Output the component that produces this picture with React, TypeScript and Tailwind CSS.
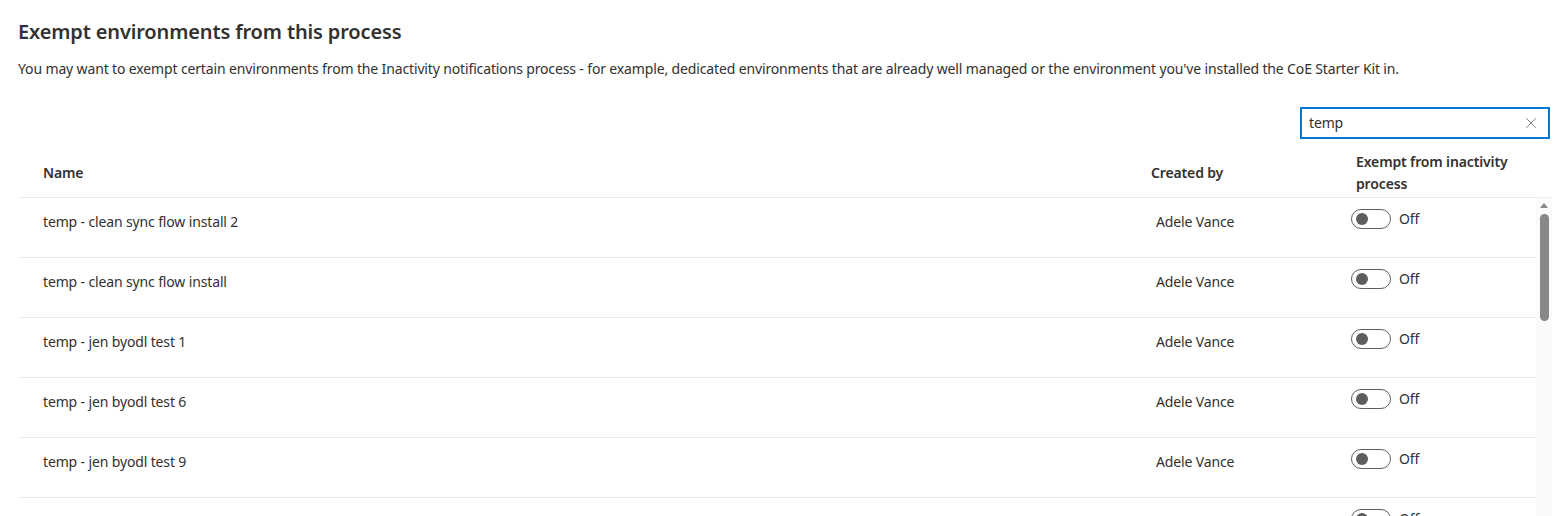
import { X } from "lucide-react";

const rows = [
  "temp - clean sync flow install 2",
  "temp - clean sync flow install",
  "temp - jen byodl test 1",
  "temp - jen byodl test 6",
  "temp - jen byodl test 9",
  "temp - jen byodl test 10",
];

function Toggle() {
  return (
    <div className="flex items-center gap-2">
      <div className="flex h-5 w-10 items-center rounded-full border border-[#605e5c] bg-white px-[4px]">
        <div className="h-3 w-3 rounded-full bg-[#605e5c]" />
      </div>
      <span className="text-sm text-[#323130]">Off</span>
    </div>
  );
}

export default function App() {
  return (
    <main
      className="h-[516px] overflow-hidden bg-white tracking-[-0.14px] text-[#323130]"
      style={{ fontFamily: '"Segoe UI", "Noto Sans", "Open Sans", sans-serif' }}
    >
      <div className="pl-[18px] pr-[12px] pt-[19px]">
        <h1 className="text-[20px] leading-[26px] font-semibold text-[#323130]">
          Exempt environments from this process
        </h1>
        <p className="mt-[14px] text-sm leading-5">
          You may want to exempt certain environments from the Inactivity
          notifications process - for example, dedicated environments that are
          already well managed or the environment you've installed the CoE
          Starter Kit in.
        </p>

        {/* Search */}
        <div className="mt-[28px] flex justify-end">
          <div className="mr-[2px] flex h-[32px] w-[250px] items-center border-2 border-[#0078d4] pl-[7px] pr-[8px]">
            <span className="flex-1 text-sm">temp</span>
            <X size={18} strokeWidth={1} className="text-[#605e5c]" />
          </div>
        </div>

        {/* Header */}
        <div className="mt-[10px] flex h-[49px] items-center border-b border-[#edebe9] pr-[16px] text-sm font-semibold">
          <div className="flex-1 pl-[25px]">Name</div>
          <div className="w-[205px]">Created by</div>
          <div className="w-[180px] leading-[22px]">
            Exempt from inactivity
            <br />
            process
          </div>
        </div>

        {/* Body */}
        <div className="flex">
          <div className="flex-1">
            {rows.map((name) => (
              <div
                key={name}
                className="flex h-[60px] border-b border-[#edebe9] text-sm leading-5"
              >
                <div className="flex-1 pl-[25px] pt-[14px]">{name}</div>
                <div className="w-[195px] pt-[14px]">Adele Vance</div>
                <div className="w-[185px] pt-[11px]">
                  <Toggle />
                </div>
              </div>
            ))}
          </div>
          <div className="flex w-[16px] flex-col items-center bg-[#fafafa] pt-[5px]">
            <div className="h-0 w-0 border-x-[4px] border-b-[5px] border-x-transparent border-b-[#888]" />
            <div className="mt-[6px] h-[107px] w-[9px] rounded-full bg-[#888]" />
          </div>
        </div>
      </div>
    </main>
  );
}
